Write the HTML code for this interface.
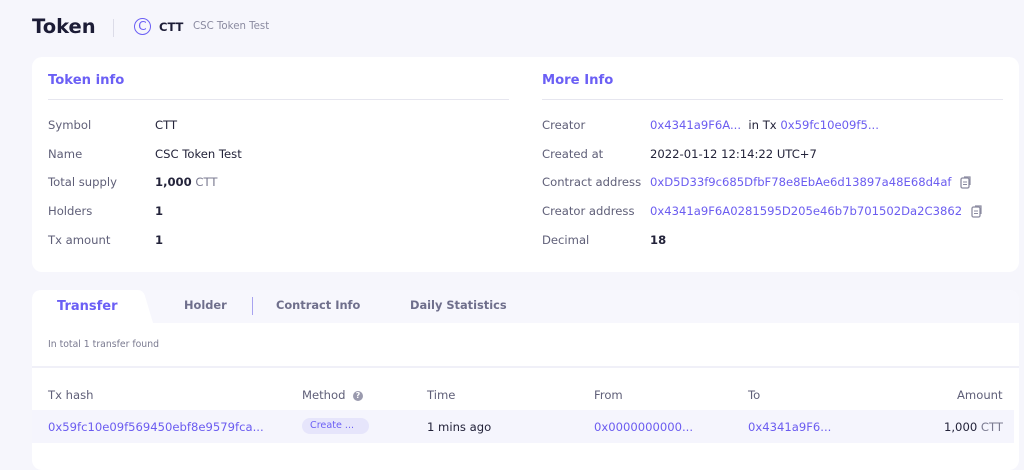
<!DOCTYPE html>
<html><head><meta charset="utf-8"><style>
*{margin:0;padding:0;box-sizing:border-box}
body{width:1024px;height:453px;overflow:hidden;background:#f6f6fc;font-family:"DejaVu Sans","Liberation Sans",sans-serif;font-size:11.6px;color:#23233a;position:relative}
.a{position:absolute;white-space:nowrap}
.lbl{color:#5f5f78}
.lnk{color:#6b5cf0}
.card{position:absolute;background:#fff;border-radius:10px}
.h{font-weight:bold;color:#6b5ff5;font-size:13.2px}
.gray{color:#7a7a90}
b{font-weight:600}
.tab{font-weight:bold;color:#6f6f8c;font-size:11.4px}
</style></head><body>
<div class="a" style="left:32px;top:15px;font-size:19.5px;font-weight:bold;color:#1c1c36">Token</div>
<div class="a" style="left:113px;top:19px;width:1px;height:18px;background:#dcdce8"></div>
<div class="a" style="left:134px;top:18px;width:17px;height:17px;border:1.5px solid #6b5ff5;border-radius:50%;color:#6b5ff5;font-size:12px;line-height:14px;text-align:center">C</div>
<div class="a" style="left:159px;top:20px;font-weight:bold;font-size:11.5px;color:#1c1c36">CTT</div>
<div class="a" style="left:193px;top:21px;font-size:10.2px;color:#8a8aa0">CSC Token Test</div>

<div class="card" style="left:32px;top:57px;width:987px;height:215px"></div>
<div class="a h" style="left:48px;top:73px">Token info</div>
<div class="a" style="left:48px;top:99px;width:461px;height:1px;background:#e6e6ef"></div>
<div class="a h" style="left:542px;top:73px">More Info</div>
<div class="a" style="left:542px;top:99px;width:461px;height:1px;background:#e6e6ef"></div>

<div class="a lbl" style="left:48px;top:118px">Symbol</div><div class="a" style="left:155px;top:118px">CTT</div>
<div class="a lbl" style="left:48px;top:147px">Name</div><div class="a" style="left:155px;top:147px">CSC Token Test</div>
<div class="a lbl" style="left:48px;top:175px">Total supply</div><div class="a" style="left:155px;top:175px"><b>1,000</b> <span class="gray">CTT</span></div>
<div class="a lbl" style="left:48px;top:204px">Holders</div><div class="a" style="left:155px;top:204px"><b>1</b></div>
<div class="a lbl" style="left:48px;top:233px">Tx amount</div><div class="a" style="left:155px;top:233px"><b>1</b></div>

<div class="a lbl" style="left:542px;top:118px">Creator</div><div class="a" style="left:650px;top:118px"><span class="lnk">0x4341a9F6A...</span> &nbsp;in Tx <span class="lnk">0x59fc10e09f5...</span></div>
<div class="a lbl" style="left:542px;top:147px">Created at</div><div class="a" style="left:650px;top:147px">2022-01-12 12:14:22 UTC+7</div>
<div class="a lbl" style="left:542px;top:175px">Contract address</div><div class="a lnk" style="left:650px;top:175px">0xD5D33f9c685DfbF78e8EbAe6d13897a48E68d4af</div>
<svg class="a" style="left:960px;top:176px" width="12" height="13"><rect x="1" y="2" width="8" height="10" rx="1.5" fill="none" stroke="#8b8ba0" stroke-width="1.3"/><path d="M4 1H10V9" fill="none" stroke="#8b8ba0" stroke-width="1.2"/><path d="M3 6H7M3 8.5H7" stroke="#8b8ba0"/></svg>
<div class="a lbl" style="left:542px;top:204px">Creator address</div><div class="a lnk" style="left:650px;top:204px">0x4341a9F6A0281595D205e46b7b701502Da2C3862</div>
<svg class="a" style="left:971px;top:205px" width="12" height="13"><rect x="1" y="2" width="8" height="10" rx="1.5" fill="none" stroke="#8b8ba0" stroke-width="1.3"/><path d="M4 1H10V9" fill="none" stroke="#8b8ba0" stroke-width="1.2"/><path d="M3 6H7M3 8.5H7" stroke="#8b8ba0"/></svg>
<div class="a lbl" style="left:542px;top:233px">Decimal</div><div class="a" style="left:650px;top:233px"><b>18</b></div>

<div class="card" style="left:32px;top:290px;width:987px;height:180px;background:#fff"></div>
<div class="a" style="left:32px;top:290px;width:987px;height:33px;background:#f7f7fd;border-radius:10px 10px 0 0"></div>
<svg class="a" style="left:32px;top:290px" width="160" height="33"><path d="M0 33 V10 Q0 0 10 0 H106 Q111 0 113 6 L121 33 Z" fill="#fff"/></svg>
<div class="a" style="left:57px;top:299px;font-weight:bold;color:#6b5ff5;font-size:13px">Transfer</div>
<div class="a tab" style="left:184px;top:298px">Holder</div>
<div class="a" style="left:252px;top:297px;width:1px;height:18px;background:#a8a3f0"></div>
<div class="a tab" style="left:276px;top:298px">Contract Info</div>
<div class="a tab" style="left:410px;top:298px">Daily Statistics</div>
<div class="a" style="left:48px;top:339px;font-size:9.3px;color:#7a7a90">In total 1 transfer found</div>
<div class="a" style="left:32px;top:366px;width:987px;height:2px;background:#f0f0f8"></div>

<div class="a lbl" style="left:48px;top:388px">Tx hash</div>
<div class="a lbl" style="left:302px;top:388px">Method</div>
<div class="a" style="left:353px;top:391px;width:10px;height:10px;border-radius:50%;background:#9a9aae;color:#fff;font-size:8px;line-height:10px;text-align:center;font-weight:bold">?</div>
<div class="a lbl" style="left:427px;top:388px">Time</div>
<div class="a lbl" style="left:594px;top:388px">From</div>
<div class="a lbl" style="left:748px;top:388px">To</div>
<div class="a lbl" style="left:957px;top:388px">Amount</div>
<div class="a" style="left:32px;top:410px;width:982px;height:33px;background:#f5f5fd"></div>
<div class="a lnk" style="left:48px;top:420px">0x59fc10e09f569450ebf8e9579fca...</div>
<div class="a" style="left:302px;top:418px;width:67px;height:16px;border-radius:8px;background:#e6e5fb;color:#6b5ff5;font-size:9.6px;line-height:16px;padding-left:8px">Create ...</div>
<div class="a" style="left:427px;top:420px">1 mins ago</div>
<div class="a lnk" style="left:594px;top:420px">0x0000000000...</div>
<div class="a lnk" style="left:748px;top:420px">0x4341a9F6...</div>
<div class="a" style="left:944px;top:420px">1,000 <span class="gray">CTT</span></div>
</body></html>
